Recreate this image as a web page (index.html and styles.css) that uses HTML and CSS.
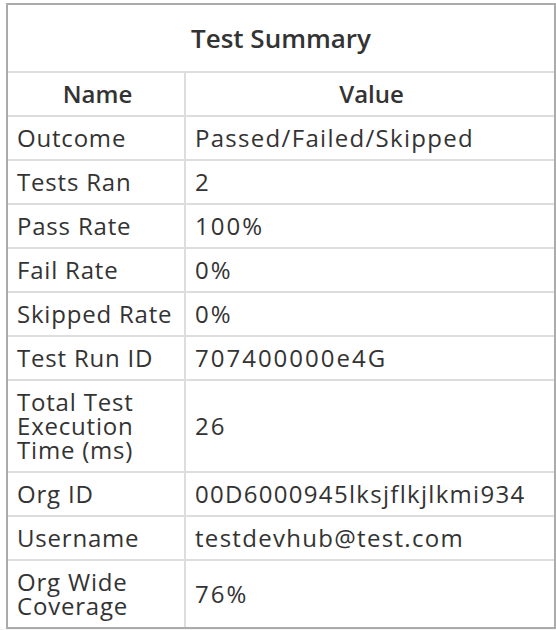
FILE: index.html
```html
<!DOCTYPE html>
<html lang="en">
<head>
<meta charset="utf-8">
<title>Test Summary</title>
<link rel="stylesheet" href="styles.css">
</head>
<body>
<div class="page">
  <table class="summary">
    <colgroup>
      <col class="col-name">
      <col class="col-value">
    </colgroup>
    <thead>
      <tr><th class="title" colspan="2">Test Summary</th></tr>
      <tr><th class="head">Name</th><th class="head last">Value</th></tr>
    </thead>
    <tbody>
      <tr><td class="name">Outcome</td><td class="last value">Passed/Failed/Skipped</td></tr>
      <tr><td class="name">Tests Ran</td><td class="last value num">2</td></tr>
      <tr><td class="name">Pass Rate</td><td class="last value num">100%</td></tr>
      <tr><td class="name">Fail Rate</td><td class="last value num">0%</td></tr>
      <tr><td class="name">Skipped Rate</td><td class="last value num">0%</td></tr>
      <tr><td class="name">Test Run ID</td><td class="last value num">707400000e4G</td></tr>
      <tr><td class="name">Total Test Execution Time (ms)</td><td class="last value num">26</td></tr>
      <tr><td class="name">Org ID</td><td class="last value">00D6000945lksjflkjlkmi934</td></tr>
      <tr><td class="name">Username</td><td class="last value">testdevhub@test.com</td></tr>
      <tr class="end"><td class="name">Org Wide Coverage</td><td class="last value num">76%</td></tr>
    </tbody>
  </table>
</div>
<div class="footer-strip"></div>
</body>
</html>
```

FILE: styles.css
```css
html, body {
  margin: 0;
  padding: 0;
  background: #ffffff;
  overflow: hidden;
}

.page {
  padding: 3px 0 0 6px;
  background: #ffffff;
}

.footer-strip {
  height: 3px;
  background: #f5f5f5;
}

.summary {
  box-sizing: border-box;
  width: 550px;
  table-layout: fixed;
  border-collapse: separate;
  border-spacing: 0;
  border: 2px solid #ababab;
  font-family: "Open Sans", "Noto Sans", sans-serif;
  font-size: 24px;
  line-height: 24px;
  color: #333333;
}

.col-name { width: 178px; }
.col-value { width: 368px; }

.summary th,
.summary td {
  box-sizing: border-box;
  padding: 9px 6px 9px 9px;
  border-right: 2px solid #dddddd;
  border-bottom: 2px solid #dddddd;
  vertical-align: middle;
  text-align: left;
  font-weight: 400;
}

.summary .name {
  letter-spacing: 0.8px;
}

.summary .value {
  letter-spacing: 1.3px;
}

.summary .num {
  letter-spacing: 2px;
}

.summary .last {
  border-right: 0;
}

.summary .end td {
  border-bottom: 0;
}

.summary th.title {
  border-right: 0;
  padding: 20px 8px;
  font-size: 26px;
  line-height: 26px;
  font-weight: 600;
  text-align: center;
}

.summary th.head {
  font-weight: 600;
  text-align: center;
}
```
